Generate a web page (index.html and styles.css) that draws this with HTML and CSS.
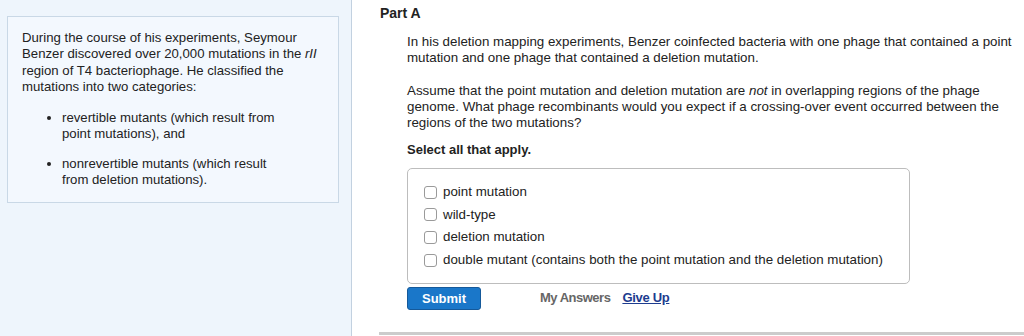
FILE: index.html
```html
<!DOCTYPE html>
<html>
<head>
<meta charset="utf-8">
<link rel="stylesheet" href="styles.css">
</head>
<body>
<div class="page">
  <aside class="sidebar">
    <div class="info">
      <p>During the course of his experiments, Seymour Benzer discovered over 20,000 mutations in the <i>rII</i> region of T4 bacteriophage. He classified the mutations into two categories:</p>
      <ul>
        <li>revertible mutants (which result from point mutations), and</li>
        <li>nonrevertible mutants (which result from deletion mutations).</li>
      </ul>
    </div>
  </aside>
  <main class="main">
    <h2 class="part">Part A</h2>
    <div class="question">
      <p>In his deletion mapping experiments, Benzer coinfected bacteria with one phage that contained a point mutation and one phage that contained a deletion mutation.</p>
      <p>Assume that the point mutation and deletion mutation are <i>not</i> in overlapping regions of the phage genome. What phage recombinants would you expect if a crossing-over event occurred between the regions of the two mutations?</p>
      <p class="select">Select all that apply.</p>
      <div class="options">
        <label class="opt"><span class="box"></span>point mutation</label>
        <label class="opt"><span class="box"></span>wild-type</label>
        <label class="opt"><span class="box"></span>deletion mutation</label>
        <label class="opt"><span class="box"></span>double mutant (contains both the point mutation and the deletion mutation)</label>
      </div>
      <div class="actions">
        <button class="submit">Submit</button>
        <span class="my">My Answers</span>
        <a class="give" href="#">Give Up</a>
      </div>
    </div>
    <div class="rule"></div>
  </main>
</div>
</body>
</html>
```

FILE: styles.css
```css
html, body {
  margin: 0;
  padding: 0;
  background: #fff;
}
body {
  font-family: "Liberation Sans", Arial, Helvetica, sans-serif;
  font-size: 13px;
  color: #222;
}
.page {
  display: flex;
  height: 336px;
  overflow: hidden;
}
.sidebar {
  width: 352px;
  flex: none;
  background: #eef5fc;
  border-right: 1px solid #c2d1e0;
  padding: 16px 0 0 7px;
  box-sizing: border-box;
}
.info {
  width: 332px;
  box-sizing: border-box;
  background: #f3f8fe;
  border: 1px solid #c9d8e6;
  padding: 13px 10px 14px 14px;
  line-height: 16.3px;
  font-size: 13.2px;
}
.info p {
  margin: 0 0 15px;
}
.info ul {
  margin: 0;
  padding-left: 40px;
  padding-right: 36px;
}
.info li {
  margin-bottom: 13px;
}
.info li:last-child {
  margin-bottom: 0;
}
.main {
  flex: 1;
  padding-left: 28px;
  position: relative;
}
.part {
  margin: 5px 0 0;
  font-size: 14px;
  font-weight: bold;
  line-height: 16px;
  color: #222;
}
.question {
  padding-left: 27px;
  padding-right: 6px;
  line-height: 16.3px;
  font-size: 13.35px;
}
.question p {
  margin: 0;
}
.question p:first-child {
  margin-top: 13px;
}
.question p + p {
  margin-top: 16px;
}
.question p.select {
  margin-top: 11px;
  font-weight: bold;
  font-size: 13px;
}
.options {
  margin-top: 9px;
  width: 503px;
  height: 116px;
  box-sizing: border-box;
  border: 1px solid #bdbdbd;
  border-radius: 5px;
  padding: 12px 0 0 16px;
}
.opt {
  display: flex;
  align-items: center;
  height: 22.7px;
  gap: 6px;
}
.box {
  width: 11px;
  height: 11px;
  border: 1px solid #9a9a9a;
  border-radius: 3px;
  background: #fff;
  flex: none;
}
.actions {
  display: flex;
  align-items: center;
  margin-top: 3px;
  font-size: 13px;
}
.submit {
  width: 74px;
  height: 23px;
  background: #1a77c9;
  border: 1px solid #15599a;
  border-radius: 3px;
  color: #fff;
  font-family: "Liberation Sans", Arial, sans-serif;
  font-weight: bold;
  font-size: 13px;
  padding: 0;
}
.my {
  margin-left: 59px;
  font-weight: bold;
  color: #666;
  letter-spacing: -0.5px;
}
.give {
  margin-left: 12px;
  font-weight: bold;
  color: #1d3c8f;
  text-decoration: underline;
  letter-spacing: -0.3px;
}
.rule {
  position: absolute;
  left: 27px;
  right: 0;
  top: 332px;
  height: 3px;
  background: #cccccc;
}
```
